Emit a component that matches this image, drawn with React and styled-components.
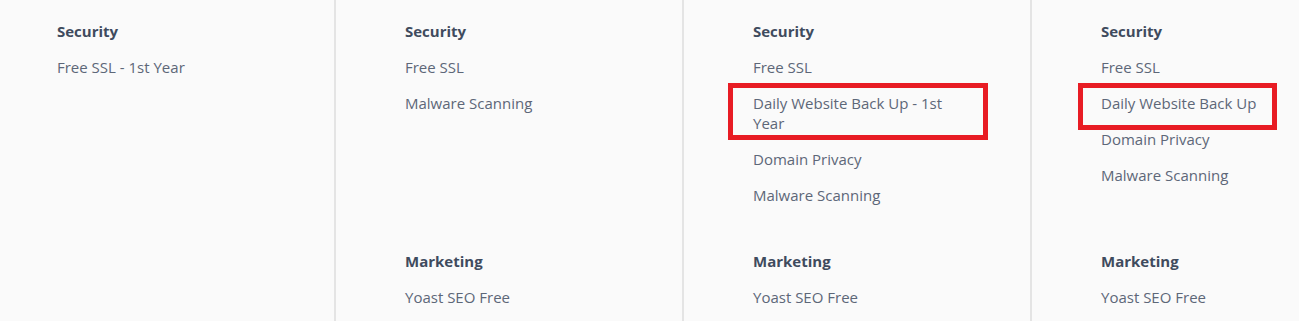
import React from "react";
import styled, { createGlobalStyle } from "styled-components";

const GlobalStyle = createGlobalStyle`
  body {
    margin: 0;
    background: #fafafa;
    font-family: "Open Sans", "Noto Sans", sans-serif;
  }
`;

const Table = styled.div`
  display: grid;
  grid-template-columns: 336px 348px 348px 1fr;
  min-height: 321px;
  overflow: hidden;
`;

const Cell = styled.div`
  padding: 21px 0 25px ${(p) => (p.first ? 57 : 69)}px;
  border-right: ${(p) => (p.last ? "none" : "2px solid #e4e4e4")};
`;

const Heading = styled.div`
  font-size: 15px;
  font-weight: 700;
  line-height: 20px;
  color: #3f4b5e;
`;

const List = styled.ul`
  list-style: none;
  margin: 16px 0 0;
  padding: 0;
  display: flex;
  flex-direction: column;
  gap: 16px;
  width: 212px;
`;

const Item = styled.li`
  position: relative;
  font-size: 15px;
  line-height: 20px;
  color: #5d6778;
`;

const Mark = styled.span`
  position: absolute;
  left: ${(p) => p.x}px;
  top: -10px;
  width: ${(p) => p.w}px;
  height: ${(p) => p.h}px;
  border: 5px solid #e81c24;
  box-sizing: border-box;
`;

const columns = [
  {
    security: [{ t: "Free SSL - 1st Year" }],
    marketing: null,
  },
  {
    security: [{ t: "Free SSL" }, { t: "Malware Scanning" }],
    marketing: ["Yoast SEO Free"],
  },
  {
    security: [
      { t: "Free SSL" },
      { t: "Daily Website Back Up - 1st Year", mark: { x: -25, w: 260, h: 57 } },
      { t: "Domain Privacy" },
      { t: "Malware Scanning" },
    ],
    marketing: ["Yoast SEO Free"],
  },
  {
    security: [
      { t: "Free SSL" },
      { t: "Daily Website Back Up", mark: { x: -23, w: 199, h: 47 } },
      { t: "Domain Privacy" },
      { t: "Malware Scanning" },
    ],
    marketing: ["Yoast SEO Free"],
  },
];

const App = () => {
  return (
    <>
      <GlobalStyle />
      <Table>
        {columns.map((c, i) => (
          <Cell key={"s" + i} first={i === 0} last={i === 3}>
            <Heading>Security</Heading>
            <List>
              {c.security.map((it) => (
                <Item key={it.t}>
                  {it.t}
                  {it.mark && <Mark x={it.mark.x} w={it.mark.w} h={it.mark.h} />}
                </Item>
              ))}
            </List>
          </Cell>
        ))}
        {columns.map((c, i) => (
          <Cell key={"m" + i} first={i === 0} last={i === 3}>
            {c.marketing && (
              <>
                <Heading>Marketing</Heading>
                <List>
                  {c.marketing.map((t) => (
                    <Item key={t}>{t}</Item>
                  ))}
                </List>
              </>
            )}
          </Cell>
        ))}
      </Table>
    </>
  );
};

export default App;
